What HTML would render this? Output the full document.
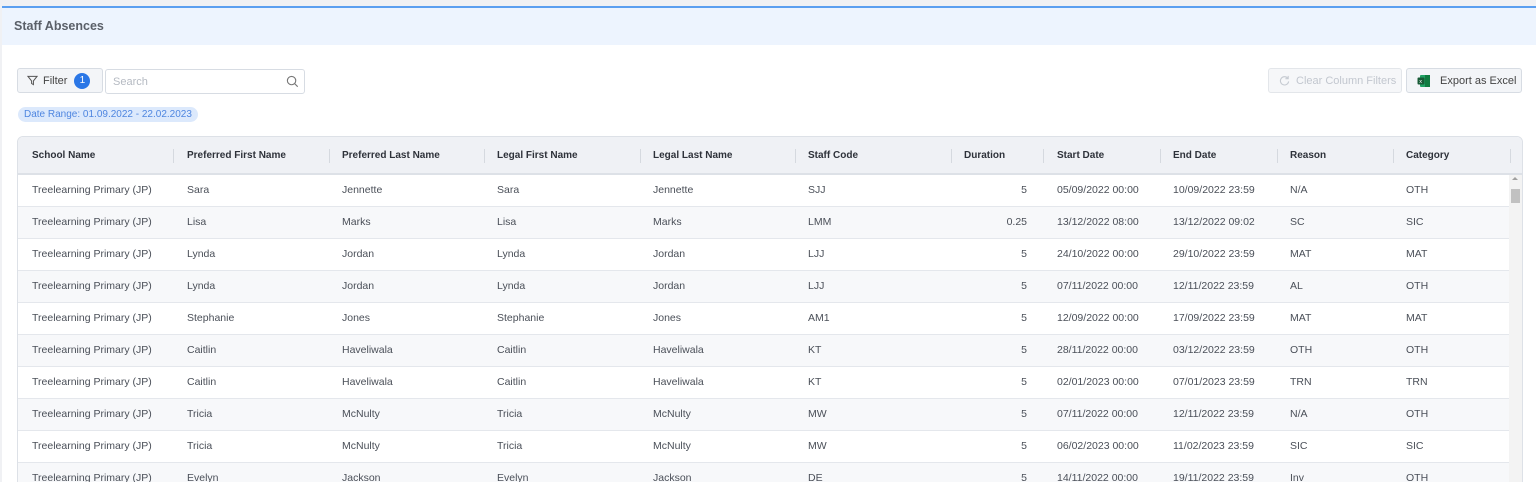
<!DOCTYPE html>
<html><head><style>
*{box-sizing:border-box;margin:0;padding:0}
html,body{width:1536px;height:482px;overflow:hidden}
body{background:#f0f1f4;font-family:"Liberation Sans",sans-serif;font-size:10.5px;color:#4a4f58;position:relative}
.card{position:absolute;left:2px;top:6px;width:1534px;height:476px;background:#fff;border-top:2px solid #5b9ff0;overflow:hidden}
.hdr{height:37px;background:#edf4fe;padding:11px 12px;font-weight:bold;font-size:12.5px;color:#5a5f68}
.btn{position:absolute;height:25px;border:1px solid #d7dce3;border-radius:3px;background:#f3f5f8;display:flex;align-items:center;font-size:11px}
.badge{display:inline-block;width:16px;height:16px;border-radius:50%;background:#2b77e6;color:#fff;text-align:center;line-height:16px;font-size:10px;margin-left:7px}
.tag{position:absolute;left:16px;top:99px;height:15px;padding:0 6px;border-radius:8px;background:#dce9fc;color:#4f86e0;font-size:10px;line-height:15px}
.tbl{position:absolute;left:15px;top:128px;width:1506px;height:360px;border:1px solid #dde1e7;border-radius:6px;overflow:hidden}
.th{height:38px;background:#eff1f5;border-bottom:2px solid #dde1e7;position:relative;font-weight:bold;color:#2e323a;font-size:10px}
.row{height:32px;border-bottom:1px solid #e4e7ec;position:relative}
.row:nth-child(even){background:#f7f8fa}
.c{position:absolute;top:0;line-height:31px;white-space:nowrap}
.th .c{line-height:37px}
.sep{position:absolute;top:12px;width:1px;height:14px;background:#d5d9df}
.sb{position:absolute;left:1491px;top:38px;width:13px;height:330px;background:#f3f3f3}
</style></head><body>
<div class="card">
<div class="hdr">Staff Absences</div>
<div class="btn" style="left:15px;top:60px;width:86px;padding-left:9px;color:#444">
<svg width="11" height="11" viewBox="0 0 12 12"><path d="M1 1.5h10L7 6.5v4l-2-1.2V6.5z" fill="none" stroke="#555" stroke-width="1.1"/></svg>
<span style="margin-left:5px">Filter</span><span class="badge">1</span></div>
<div class="btn" style="left:103px;top:61px;width:200px;height:25px;background:#fff;color:#b5bac2;padding-left:7px">Search
<svg style="position:absolute;right:5px;top:5px" width="13" height="13" viewBox="0 0 14 14"><circle cx="6" cy="6" r="4.5" fill="none" stroke="#777" stroke-width="1.2"/><path d="M9.3 9.3l3.3 3.3" stroke="#777" stroke-width="1.2"/></svg></div>
<div class="btn" style="left:1266px;top:60px;width:134px;color:#c2c7cf;padding-left:10px;background:#f6f7f9;border-color:#e3e6ea">
<svg width="11" height="11" viewBox="0 0 12 12"><path d="M9.5 3.5A4.5 4.5 0 1 0 10.5 7" fill="none" stroke="#c5cad1" stroke-width="1.2"/><path d="M10 1v3H7" fill="none" stroke="#c5cad1" stroke-width="1.2"/></svg>
<span style="margin-left:6px">Clear Column Filters</span></div>
<div class="btn" style="left:1404px;top:60px;width:116px;color:#444;padding-left:10px">
<svg width="14" height="14" viewBox="0 0 14 14"><rect x="3" y="1" width="10" height="12" rx="1" fill="#21a366"/><rect x="8" y="1" width="5" height="12" fill="#107c41"/><rect x="0.5" y="3.5" width="7" height="7" rx="1" fill="#185c37"/><text x="2.3" y="9" font-size="5.5" fill="#fff" font-family="Liberation Sans">x</text></svg>
<span style="margin-left:9px">Export as Excel</span></div>
<div class="tag">Date Range: 01.09.2022 - 22.02.2023</div>
<div class="tbl">
<div class="th">
<span class="c" style="left:14px">School Name</span><span class="sep" style="left:155px"></span>
<span class="c" style="left:169px">Preferred First Name</span><span class="sep" style="left:311px"></span>
<span class="c" style="left:324px">Preferred Last Name</span><span class="sep" style="left:466px"></span>
<span class="c" style="left:479px">Legal First Name</span><span class="sep" style="left:622px"></span>
<span class="c" style="left:635px">Legal Last Name</span><span class="sep" style="left:777px"></span>
<span class="c" style="left:790px">Staff Code</span><span class="sep" style="left:933px"></span>
<span class="c" style="left:946px">Duration</span><span class="sep" style="left:1025px"></span>
<span class="c" style="left:1039px">Start Date</span><span class="sep" style="left:1142px"></span>
<span class="c" style="left:1155px">End Date</span><span class="sep" style="left:1259px"></span>
<span class="c" style="left:1272px">Reason</span><span class="sep" style="left:1375px"></span>
<span class="c" style="left:1388px">Category</span><span class="sep" style="left:1492px"></span>
</div>
<div id="rows"></div>
<div class="sb"><div style="position:absolute;top:14px;left:2px;width:9px;height:14px;background:#c1c1c1"></div><div style="position:absolute;top:2px;left:3px;border:3px solid transparent;border-bottom-color:#a0a0a0;border-top:0"></div></div>
</div>
</div>
<script>
var d=[["Sara","Jennette","SJJ","5","05/09/2022 00:00","10/09/2022 23:59","N/A","OTH"],
["Lisa","Marks","LMM","0.25","13/12/2022 08:00","13/12/2022 09:02","SC","SIC"],
["Lynda","Jordan","LJJ","5","24/10/2022 00:00","29/10/2022 23:59","MAT","MAT"],
["Lynda","Jordan","LJJ","5","07/11/2022 00:00","12/11/2022 23:59","AL","OTH"],
["Stephanie","Jones","AM1","5","12/09/2022 00:00","17/09/2022 23:59","MAT","MAT"],
["Caitlin","Haveliwala","KT","5","28/11/2022 00:00","03/12/2022 23:59","OTH","OTH"],
["Caitlin","Haveliwala","KT","5","02/01/2023 00:00","07/01/2023 23:59","TRN","TRN"],
["Tricia","McNulty","MW","5","07/11/2022 00:00","12/11/2022 23:59","N/A","OTH"],
["Tricia","McNulty","MW","5","06/02/2023 00:00","11/02/2023 23:59","SIC","SIC"],
["Evelyn","Jackson","DE","5","14/11/2022 00:00","19/11/2022 23:59","Inv","OTH"]];
var h="";d.forEach(function(r){h+='<div class="row"><span class="c" style="left:14px">Treelearning Primary (JP)</span><span class="c" style="left:169px">'+r[0]+'</span><span class="c" style="left:324px">'+r[1]+'</span><span class="c" style="left:479px">'+r[0]+'</span><span class="c" style="left:635px">'+r[1]+'</span><span class="c" style="left:790px">'+r[2]+'</span><span class="c" style="right:495px">'+r[3]+'</span><span class="c" style="left:1039px">'+r[4]+'</span><span class="c" style="left:1155px">'+r[5]+'</span><span class="c" style="left:1272px">'+r[6]+'</span><span class="c" style="left:1388px">'+r[7]+'</span></div>';});
document.getElementById("rows").innerHTML=h;
</script>
</body></html>
